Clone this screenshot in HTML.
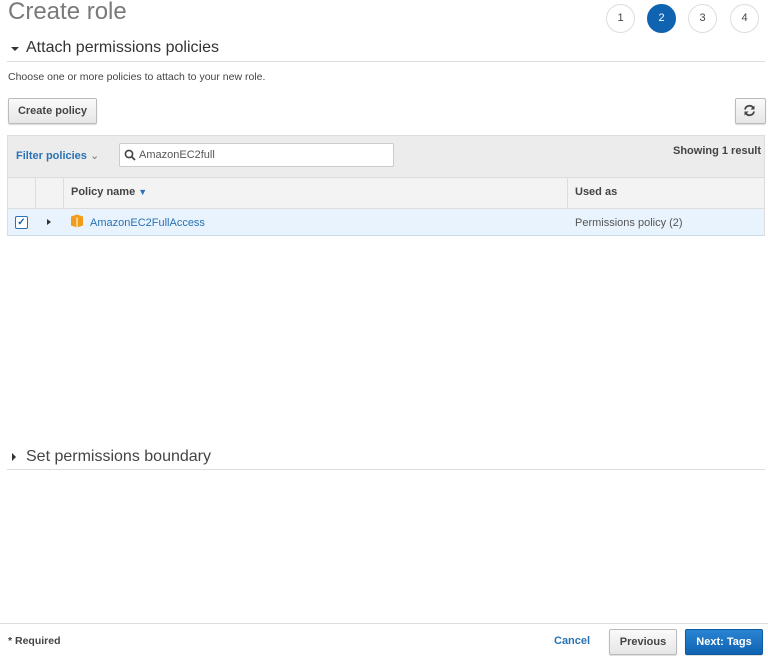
<!DOCTYPE html>
<html><head><style>
body{margin:0;width:768px;height:656px;background:#fff;font-family:"Liberation Sans",sans-serif;position:relative;overflow:hidden}
.a{position:absolute;white-space:nowrap}
.c{position:absolute;top:4px;width:27px;height:27px;border-radius:50%;border:1px solid #ddd;text-align:center;line-height:27px;font-size:11px;color:#444}
.btn{position:absolute;border:1px solid #bbb;border-radius:2px;background:linear-gradient(#fafafa,#e6e6e6);font-size:11px;font-weight:bold;color:#444;text-align:center;box-shadow:0 1px 1px rgba(0,0,0,.15)}
</style></head><body>
<div class="a" style="left:8px;top:-2px;font-size:24px;color:#7a7a7a">Create role</div>
<div class="c" style="left:606px">1</div>
<div class="c" style="left:647px;background:#0f63b0;border-color:#0f63b0;color:#fff">2</div>
<div class="c" style="left:688px">3</div>
<div class="c" style="left:730px">4</div>
<div class="a" style="left:11px;top:47px;width:0;height:0;border-left:4px solid transparent;border-right:4px solid transparent;border-top:4px solid #333"></div>
<div class="a" style="left:26px;top:39px;font-size:16px;color:#333">Attach permissions policies</div>
<div class="a" style="left:7px;top:61px;width:758px;height:1px;background:#ddd"></div>
<div class="a" style="left:8px;top:71px;font-size:10.5px;color:#444">Choose one or more policies to attach to your new role.</div>
<div class="btn" style="left:8px;top:98px;width:87px;height:24px;line-height:24px">Create policy</div>
<div class="btn" style="left:735px;top:98px;width:29px;height:24px"></div>
<svg class="a" style="left:743px;top:104px" width="13" height="13" viewBox="0 0 13 13"><path d="M2 5.5 A4.5 4.5 0 0 1 10.3 4" fill="none" stroke="#444" stroke-width="1.8"/><path d="M11.5 1.5 V5.5 H7.5Z" fill="#444"/><path d="M11 7.5 A4.5 4.5 0 0 1 2.7 9" fill="none" stroke="#444" stroke-width="1.8"/><path d="M1.5 11.5 V7.5 H5.5Z" fill="#444"/></svg>
<div class="a" style="left:7px;top:135px;width:758px;height:101px;border:1px solid #ddd;box-sizing:border-box;background:#fff"></div>
<div class="a" style="left:8px;top:136px;width:756px;height:41px;background:#ececec"></div>
<div class="a" style="left:16px;top:149px;font-size:11px;font-weight:bold;color:#2a72b5">Filter policies <span style="font-weight:normal;color:#777">&#x2304;</span></div>
<div class="a" style="left:119px;top:143px;width:275px;height:24px;background:#fff;border:1px solid #ccc;box-sizing:border-box;border-radius:2px"></div>
<svg class="a" style="left:124px;top:149px" width="12" height="12"><circle cx="5" cy="5" r="3.6" fill="none" stroke="#444" stroke-width="1.6"/><line x1="7.6" y1="7.6" x2="11" y2="11" stroke="#444" stroke-width="1.8"/></svg>
<div class="a" style="left:139px;top:149px;font-size:11px;color:#555">AmazonEC2full</div>
<div class="a" style="left:673px;top:145px;font-size:11px;font-weight:bold;color:#444">Showing 1 result</div>
<div class="a" style="left:8px;top:177px;width:756px;height:32px;background:#f3f3f3;border-top:1px solid #ddd;border-bottom:1px solid #ddd;box-sizing:border-box"></div>
<div class="a" style="left:35px;top:177px;width:1px;height:32px;background:#ddd"></div>
<div class="a" style="left:63px;top:177px;width:1px;height:32px;background:#ddd"></div>
<div class="a" style="left:567px;top:177px;width:1px;height:32px;background:#ddd"></div>
<div class="a" style="left:71px;top:186px;font-size:11px;font-weight:bold;color:#444">Policy name <span style="color:#2a72b5;font-size:9px">&#9660;</span></div>
<div class="a" style="left:575px;top:186px;font-size:11px;font-weight:bold;color:#444">Used as</div>
<div class="a" style="left:8px;top:209px;width:756px;height:26px;background:#e8f3fd;border-bottom:1px solid #c9dbe9"></div>
<div class="a" style="left:15px;top:216px;width:11px;height:11px;border:1px solid #2a72b5;border-radius:2px;background:#fff;font-size:10px;line-height:11px;text-align:center;color:#0f63b0;font-weight:bold">&#10003;</div>
<div class="a" style="left:47px;top:219px;width:0;height:0;border-top:3.5px solid transparent;border-bottom:3.5px solid transparent;border-left:4px solid #333"></div>
<svg class="a" style="left:70px;top:214px" width="14" height="14"><path d="M1 2.5 L7 0.5 L13 2.5 V11.5 L7 13.5 L1 11.5Z" fill="#f29d1a"/><line x1="7" y1="3.5" x2="7" y2="13.5" stroke="#fff" stroke-width="1"/></svg>
<div class="a" style="left:90px;top:217px;font-size:11px;color:#2a72b5">AmazonEC2FullAccess</div>
<div class="a" style="left:575px;top:217px;font-size:11px;color:#555">Permissions policy (2)</div>
<div class="a" style="left:12px;top:453px;width:0;height:0;border-top:4px solid transparent;border-bottom:4px solid transparent;border-left:4px solid #333"></div>
<div class="a" style="left:26px;top:448px;font-size:16px;color:#444">Set permissions boundary</div>
<div class="a" style="left:7px;top:469px;width:758px;height:1px;background:#ddd"></div>
<div class="a" style="left:0;top:623px;width:768px;height:1px;background:#ddd"></div>
<div class="a" style="left:8px;top:635px;font-size:10.5px;font-weight:bold;color:#444">* Required</div>
<div class="a" style="left:554px;top:635px;font-size:11px;font-weight:bold;color:#2a72b5">Cancel</div>
<div class="btn" style="left:609px;top:629px;width:66px;height:24px;line-height:24px">Previous</div>
<div class="btn" style="left:685px;top:629px;width:76px;height:24px;line-height:24px;background:linear-gradient(#2a84d4,#0f63b0);border-color:#0d5aa0;color:#fff">Next: Tags</div>
</body></html>
